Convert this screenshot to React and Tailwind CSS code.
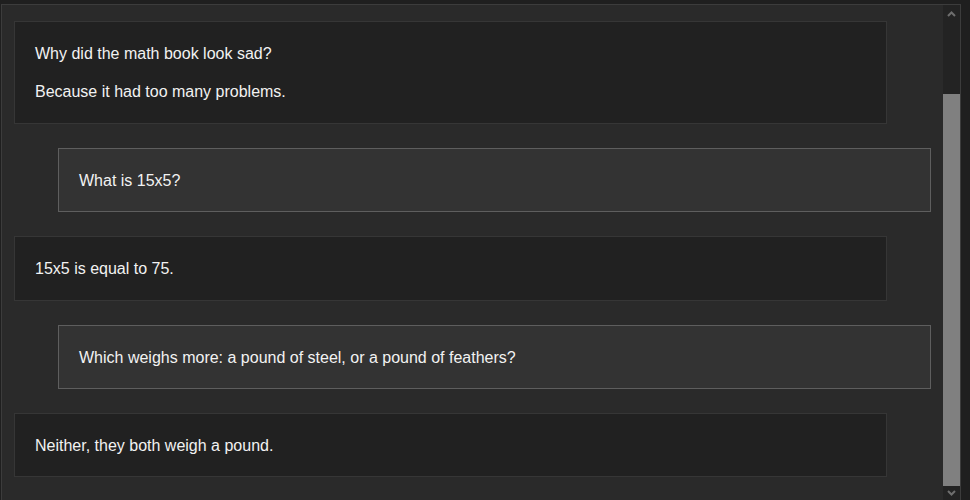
export default function App() {
  const font = { fontFamily: '"Liberation Sans", Arial, sans-serif' };
  const A = ({ children }) => (
    <div className="mr-[44px] border border-[#363636] bg-[#212121] px-5 pt-[23px] pb-[21px] flex flex-col gap-5 text-[16px] leading-[18.4px] text-[#f2f2f2]">
      {children}
    </div>
  );
  const U = ({ children }) => (
    <div className="ml-[44px] border border-[#5e5e5e] bg-[#333333] px-5 pt-[23px] pb-[21px] text-[16px] leading-[18.4px] text-[#f2f2f2]">
      {children}
    </div>
  );
  return (
    <div className="h-[500px] w-[970px] overflow-hidden bg-[#1f1f1f] pt-[4px] pl-[1px]" style={font}>
      <div className="flex h-[520px] w-[960px] border border-[#3c3c3c] bg-[#2a2a2a]">
        <div className="flex-1 px-3 pt-[16px] flex flex-col gap-6">
          <A>
            <p>Why did the math book look sad?</p>
            <p>Because it had too many problems.</p>
          </A>
          <U>What is 15x5?</U>
          <A>
            <p>15x5 is equal to 75.</p>
          </A>
          <U>Which weighs more: a pound of steel, or a pound of feathers?</U>
          <A>
            <p>Neither, they both weigh a pound.</p>
          </A>
        </div>
        <div className="flex w-[17px] flex-col bg-[#232323]">
          <div className="flex h-[17px] items-center justify-center">
            <svg width="9" height="6" viewBox="0 0 9 6">
              <path d="M1 5 L4.5 1.5 L8 5" fill="none" stroke="#6e6e6e" strokeWidth="2" />
            </svg>
          </div>
          <div className="h-[72px]" />
          <div className="h-[392px] bg-[#808080]" />
          <div className="flex h-[14px] items-start justify-center pt-[4px]">
            <svg width="9" height="6" viewBox="0 0 9 6">
              <path d="M1 1 L4.5 4.5 L8 1" fill="none" stroke="#6e6e6e" strokeWidth="2" />
            </svg>
          </div>
        </div>
      </div>
    </div>
  );
}
